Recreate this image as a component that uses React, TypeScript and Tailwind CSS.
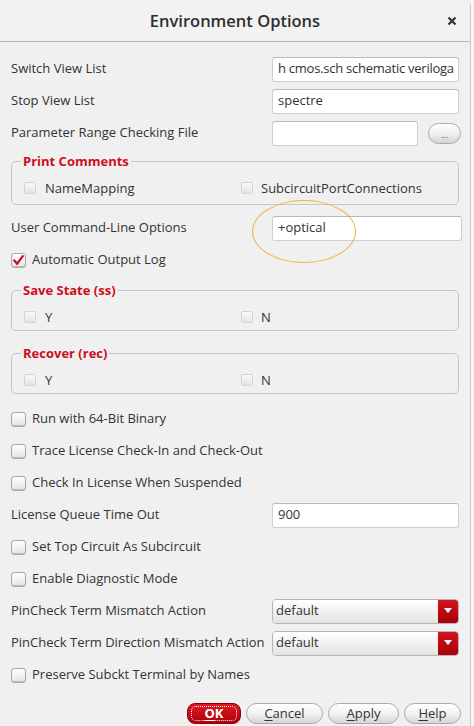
import React from 'react';

const font = { fontFamily: '"Open Sans", "Noto Sans", "Liberation Sans", sans-serif' };

function Box({ checked = false, small = false }: { checked?: boolean; small?: boolean }) {
  if (small) {
    return (
      <span className="inline-block w-[12px] h-[12px] rounded-[2px] border border-[#d4d4d4] bg-gradient-to-b from-[#fafafa] to-[#e4e4e4]" />
    );
  }
  return (
    <span className="relative inline-flex items-center justify-center w-[15px] h-[15px] rounded-[3px] border border-[#a8a8a8] bg-gradient-to-b from-white to-[#e4e4e4] shadow-[inset_0_-1px_0_#bdbdbd]">
      {checked && (
        <svg viewBox="0 0 14 14" className="w-[13px] h-[13px]">
          <path d="M2.5 7 L5.5 10.5 L11.5 2.5" fill="none" stroke="#c8102e" strokeWidth="2.4" strokeLinecap="square" />
        </svg>
      )}
    </span>
  );
}

function CheckRow({ label, checked = false }: { label: string; checked?: boolean }) {
  return (
    <div className="h-8 flex items-center gap-[6px]">
      <Box checked={checked} />
      <span>{label}</span>
    </div>
  );
}

function Field({ label, value = '', tight = false, children }: { label: string; value?: string; tight?: boolean; children?: React.ReactNode }) {
  return (
    <div className="h-8 flex items-center">
      <span className="w-[261px] shrink-0 whitespace-nowrap">{label}</span>
      {children ?? (
        <div
          className={`h-[25px] w-[190px] bg-white border border-[#cfcfcf] border-t-[#b9b9b9] rounded-[3px] flex items-center pl-[5px] overflow-hidden whitespace-nowrap ${
            tight ? 'tracking-[-0.25px]' : ''
          }`}
        >
          {value}
        </div>
      )}
    </div>
  );
}

function Select({ label }: { label: string }) {
  return (
    <div className="h-8 flex items-center">
      <span className="w-[261px] shrink-0 whitespace-nowrap">{label}</span>
      <div className="h-[25px] w-[190px] flex rounded-[4px] border border-[#b5b5b5] overflow-hidden">
        <div className="flex-1 flex items-center pl-[3px] bg-gradient-to-b from-white to-[#e3e3e3]">default</div>
        <div className="w-[20px] flex items-center justify-center bg-gradient-to-b from-[#d4141c] to-[#a80008]">
          <svg viewBox="0 0 8 6" className="w-[8px] h-[6px]">
            <path d="M0 0 L8 0 L4 5 Z" fill="white" />
          </svg>
        </div>
      </div>
    </div>
  );
}

function Group({ title, left, right, className }: { title: string; left: string; right: string; className: string }) {
  return (
    <div className={`relative border border-[#c6c6c6] rounded-[5px] ${className}`}>
      <span className="absolute -top-[11px] left-[9px] px-[2px] bg-[#f0f0f0] text-[#cc0f1c] font-bold leading-[20px]">
        {title}
      </span>
      <div className="flex items-center pt-[17px] leading-[18px]">
        <div className="w-[229px] pl-[12px] flex items-center gap-[9px]">
          <Box small />
          <span>{left}</span>
        </div>
        <div className="flex items-center gap-[8px]">
          <Box small />
          <span>{right}</span>
        </div>
      </div>
    </div>
  );
}

function Btn({ k, rest, primary = false }: { k: string; rest: string; primary?: boolean }) {
  if (primary) {
    return (
      <div className="h-[21px] w-[54px] rounded-[8px] bg-gradient-to-b from-[#dc1a22] to-[#b0000a] border border-[#8a0006] flex items-center justify-center">
        <div className="h-[15px] w-[46px] rounded-[5px] border border-dotted border-white flex items-center justify-center text-white font-bold">
          <span className="underline underline-offset-2">{k}</span>
          {rest}
        </div>
      </div>
    );
  }
  return (
    <div className="h-[21px] rounded-full border border-[#a9a9a9] bg-gradient-to-b from-white via-[#f2f2f2] to-[#d6d6d6] flex items-center justify-center text-[#333]">
      <span className="underline underline-offset-2">{k}</span>
      {rest}
    </div>
  );
}

export default function App() {
  return (
    <div className="w-[474px] h-[726px] bg-[#f7f7f7] overflow-hidden text-[13px] text-[#333]" style={font}>
      <div className="w-[471px] h-[726px] bg-[#f0f0f0] border-r border-[#c9c9c9] rounded-tr-[6px] flex flex-col">
        <div className="h-[42px] shrink-0 flex items-center justify-center relative border-b border-[#b8b8b8] bg-[#f2f2f2] rounded-tr-[6px]">
          <span className="text-[16.5px] font-semibold text-[#2e2e2e] pt-[2px]">Environment Options</span>
          <span className="absolute right-[13px] top-[16px]">
            <svg viewBox="0 0 10 10" className="w-[10px] h-[10px]">
              <path d="M1.5 1.5 L8.5 8.5 M8.5 1.5 L1.5 8.5" stroke="#333" strokeWidth="2.2" />
            </svg>
          </span>
        </div>

        <div className="px-[11px] pt-[11px] flex flex-col">
          <Field label="Switch View List" value="h cmos.sch schematic veriloga" tight />
          <Field label="Stop View List" value="spectre" />
          <Field label="Parameter Range Checking File">
            <div className="flex items-center gap-[10px]">
              <div className="h-[25px] w-[146px] bg-white border border-[#cfcfcf] border-t-[#b9b9b9] rounded-[3px]" />
              <div className="h-[21px] w-[33px] rounded-full border border-[#a9a9a9] bg-gradient-to-b from-white via-[#f0f0f0] to-[#d4d4d4] flex items-center justify-center text-[9px] leading-none pt-[3px] text-[#555]">
                ...
              </div>
            </div>
          </Field>

          <Group title="Print Comments" left="NameMapping" right="SubcircuitPortConnections" className="mt-[12px] h-[44px]" />

          <div className="mt-[7px]">
            <Field label="User Command-Line Options">
              <div className="relative">
                <div className="h-[25px] w-[190px] bg-white border border-[#cfcfcf] border-t-[#b9b9b9] rounded-[3px] flex items-center pl-[5px]">
                  +optical
                </div>
                <div className="absolute -left-[20px] -top-[16px] w-[104px] h-[63px] rounded-[50%] border-[1.5px] border-[#eeb23a]" />
              </div>
            </Field>
          </div>
          <CheckRow label="Automatic Output Log" checked />

          <Group title="Save State (ss)" left="Y" right="N" className="mt-[14px] h-[41px]" />
          <Group title="Recover (rec)" left="Y" right="N" className="mt-[22px] h-[41px]" />

          <div className="mt-[9px]">
            <CheckRow label="Run with 64-Bit Binary" />
          </div>
          <CheckRow label="Trace License Check-In and Check-Out" />
          <CheckRow label="Check In License When Suspended" />
          <Field label="License Queue Time Out" value="900" />
          <CheckRow label="Set Top Circuit As Subcircuit" />
          <CheckRow label="Enable Diagnostic Mode" />
          <Select label="PinCheck Term Mismatch Action" />
          <Select label="PinCheck Term Direction Mismatch Action" />
          <CheckRow label="Preserve Subckt Terminal by Names" />

          <div className="mt-[12px] -mr-[2px] flex justify-end gap-[5px]">
            <Btn k="O" rest="K" primary />
            <div className="w-[77px]"><Btn k="C" rest="ancel" /></div>
            <div className="w-[71px]"><Btn k="A" rest="pply" /></div>
            <div className="w-[57px]"><Btn k="H" rest="elp" /></div>
          </div>
        </div>
      </div>
    </div>
  );
}
